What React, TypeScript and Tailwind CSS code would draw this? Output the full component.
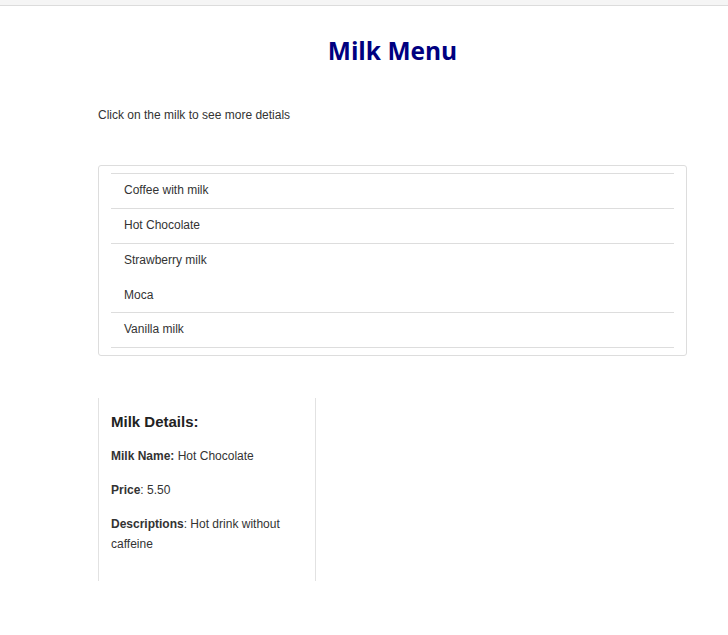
import { useState } from 'react';

type Milk = {
  name: string;
  price: string;
  description: string;
};

const milks: Milk[] = [
  { name: 'Coffee with milk', price: '4.50', description: 'Hot coffee with steamed milk' },
  { name: 'Hot Chocolate', price: '5.50', description: 'Hot drink without caffeine' },
  { name: 'Strawberry milk', price: '3.50', description: 'Cold milk with strawberry syrup' },
  { name: 'Moca', price: '5.00', description: 'Coffee with chocolate and milk' },
  { name: 'Vanilla milk', price: '3.50', description: 'Milk with vanilla flavour' },
];

// border classes per row, as they show in the picture
const rowBorders = [
  'border-t border-b h-[36px]',
  'border-b h-[35px]',
  'h-[35px] pb-[3px]',
  'border-b h-[34px]',
  'border-b h-[35px]',
];

export default function App() {
  const [selected, setSelected] = useState(1);
  const milk = milks[selected];

  return (
    <div className="min-h-screen bg-white text-[#333] font-['Liberation_Sans',Arial,sans-serif]">
      <div className="h-[6px] bg-[#f5f5f5] border-b border-[#dcdcdc]" />

      <div className="ml-[98px] w-[589px]">
        <h1 className="mt-[30px] text-center text-[24.5px] leading-[30px] font-bold text-[#000080] font-['Open_Sans',sans-serif]">
          Milk Menu
        </h1>

        <p className="mt-[39px] text-[12px] leading-[20px]">
          Click on the milk to see more detials
        </p>

        {/* Milk list */}
        <div className="mt-[40px] border border-[#dddddd] rounded-[3px] px-[12px] py-[7px]">
          <ul>
            {milks.map((m, i) => (
              <li
                key={m.name}
                onClick={() => setSelected(i)}
                className={`flex items-center pb-[2px] pl-[13px] text-[12px] cursor-pointer border-[#dddddd] ${rowBorders[i]}`}
              >
                {m.name}
              </li>
            ))}
          </ul>
        </div>

        {/* Details */}
        <div className="mt-[42px] w-[218px] border-x border-[#e2e2e2] px-[12px] pt-[14px] pb-[27px]">
          <h3 className="text-[15px] leading-[20px] font-bold text-[#222]">Milk Details:</h3>
          <p className="mt-[14px] text-[12px] leading-[20px]">
            <b>Milk Name:</b> {milk.name}
          </p>
          <p className="mt-[14px] text-[12px] leading-[20px]">
            <b>Price</b>: {milk.price}
          </p>
          <p className="mt-[14px] text-[12px] leading-[20px]">
            <b>Descriptions</b>: {milk.description}
          </p>
        </div>
      </div>
    </div>
  );
}
